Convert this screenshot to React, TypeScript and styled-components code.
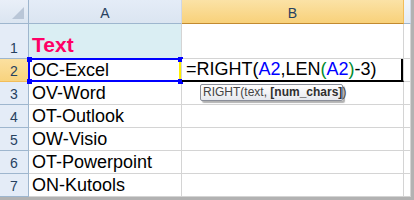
import React from "react";
import styled, { createGlobalStyle } from "styled-components";

const Global = createGlobalStyle`
  html, body { margin: 0; padding: 0; background: #ffffff; }
  * { box-sizing: border-box; }
`;

const Frame = styled.div`
  width: 414px;
  height: 200px;
  border-right: 3px solid #b2b2b2;
  border-bottom: 3px solid #b2b2b2;
  overflow: hidden;
  background: #ffffff;
  font-family: "Liberation Sans", Arial, sans-serif;
`;

const Grid = styled.div`
  display: grid;
  grid-template-columns: 29px 153px 222px 1fr;
  grid-template-rows: 24px 35px repeat(6, 23px);
`;

const Corner = styled.div`
  position: relative;
  background: linear-gradient(#e9eff8, #dbe5f1);
  border-right: 1px solid #9eb6ce;
  border-bottom: 1px solid #9eb6ce;
  &::after {
    content: "";
    position: absolute;
    right: 4px;
    bottom: 4px;
    width: 0;
    height: 0;
    border-left: 12px solid transparent;
    border-bottom: 12px solid #b9c6d7;
  }
`;

const ColHeader = styled.div<{ $selected?: boolean; $blank?: boolean }>`
  display: flex;
  align-items: center;
  justify-content: center;
  padding-top: 2px;
  font-size: 14px;
  color: #27415f;
  background: ${(p) =>
    p.$selected
      ? "linear-gradient(#fbe2a6, #f8d17a)"
      : p.$blank
      ? "linear-gradient(#f2f6fb, #e4ecf7)"
      : "linear-gradient(#e4ecf7, #dbe5f1)"};
  border-right: 1px solid ${(p) => (p.$selected ? "#f2bd59" : "#d0d7e5")};
  border-bottom: 1px solid ${(p) => (p.$selected ? "#c28a30" : "#9eb6ce")};
`;

const RowHeader = styled.div<{ $selected?: boolean }>`
  display: flex;
  align-items: flex-end;
  justify-content: center;
  padding-bottom: 1px;
  font-size: 14px;
  line-height: 18px;
  color: #27415f;
  background: ${(p) => (p.$selected ? "linear-gradient(#fbe0a0, #f8d37e)" : "#e4ecf7")};
  border-right: 1px solid ${(p) => (p.$selected ? "#c28a30" : "#9eb6ce")};
  border-bottom: 1px solid ${(p) => (p.$selected ? "#f2bd59" : "#9eb6ce")};
`;

const Cell = styled.div<{ $fill?: string }>`
  position: relative;
  display: flex;
  align-items: flex-end;
  padding: 0 0 0 3px;
  font-size: 18px;
  line-height: 21px;
  color: #000000;
  white-space: nowrap;
  background: ${(p) => p.$fill || "#ffffff"};
  border-right: 1px solid #d4d4d4;
  border-bottom: 1px solid #d4d4d4;
`;

const TitleText = styled.span`
  font-weight: bold;
  font-size: 21px;
  line-height: 26px;
  color: #ff0066;
`;

const ActiveCell = styled(Cell)`
  &::after {
    content: "";
    position: absolute;
    left: -1px;
    top: -1px;
    right: 0;
    bottom: -1px;
    border: 2px solid #0000ff;
    border-right-color: #ffee00;
    pointer-events: none;
  }
`;

const Handle = styled.span<{ $x: "left" | "right"; $y: "top" | "bottom" }>`
  position: absolute;
  width: 5px;
  height: 5px;
  background: #0000ff;
  ${(p) => (p.$x === "left" ? "left: -2px;" : "right: -2px;")}
  ${(p) => (p.$y === "top" ? "top: -2px;" : "bottom: -3px;")}
  z-index: 2;
`;

const EditCell = styled(Cell)`
  padding-left: 4px;
  overflow: visible;
  z-index: 3;
  border-bottom: 2px solid #000000;
  border-right: 1px solid #d4d4d4;
  &::after {
    content: "";
    position: absolute;
    right: 0;
    top: 0;
    bottom: -2px;
    width: 2px;
    background: #000000;
  }
`;

const Ref = styled.span`
  color: #0000ff;
`;

const Paren = styled.span`
  color: #008a2e;
`;

const Tooltip = styled.div`
  position: absolute;
  left: 18px;
  top: 25px;
  width: 143px;
  height: 17px;
  padding: 0 0 0 2px;
  display: flex;
  align-items: center;
  font-family: "Liberation Sans", Arial, sans-serif;
  font-size: 12px;
  line-height: 15px;
  color: #444444;
  background: linear-gradient(#ffffff, #e6e8ee);
  border: 1px solid #8a8e99;
  border-radius: 2px;
  box-shadow: 2px 2px 1px rgba(0, 0, 0, 0.3);
  white-space: nowrap;
  b {
    color: #2f2f2f;
    font-weight: 700;
  }
`;

const rows = ["OV-Word", "OT-Outlook", "OW-Visio", "OT-Powerpoint", "ON-Kutools"];

export default function App() {
  return (
    <>
      <Global />
      <Frame>
        <Grid>
          <Corner />
          <ColHeader>A</ColHeader>
          <ColHeader $selected>B</ColHeader>
          <ColHeader $blank />

          <RowHeader>1</RowHeader>
          <Cell $fill="#daeef3">
            <TitleText>Text</TitleText>
          </Cell>
          <Cell />
          <Cell />

          <RowHeader $selected>2</RowHeader>
          <ActiveCell>
            OC-Excel
            <Handle $x="left" $y="top" />
            <Handle $x="right" $y="top" />
            <Handle $x="left" $y="bottom" />
            <Handle $x="right" $y="bottom" />
          </ActiveCell>
          <EditCell>
            =RIGHT(<Ref>A2</Ref>,LEN<Paren>(</Paren>
            <Ref>A2</Ref>
            <Paren>)</Paren>-3)
            <Tooltip>
              RIGHT(text,&nbsp;<b>[num_chars]</b>)
            </Tooltip>
          </EditCell>
          <Cell />

          {rows.map((r, i) => (
            <React.Fragment key={r}>
              <RowHeader>{i + 3}</RowHeader>
              <Cell>{r}</Cell>
              <Cell />
              <Cell />
            </React.Fragment>
          ))}
        </Grid>
      </Frame>
    </>
  );
}
